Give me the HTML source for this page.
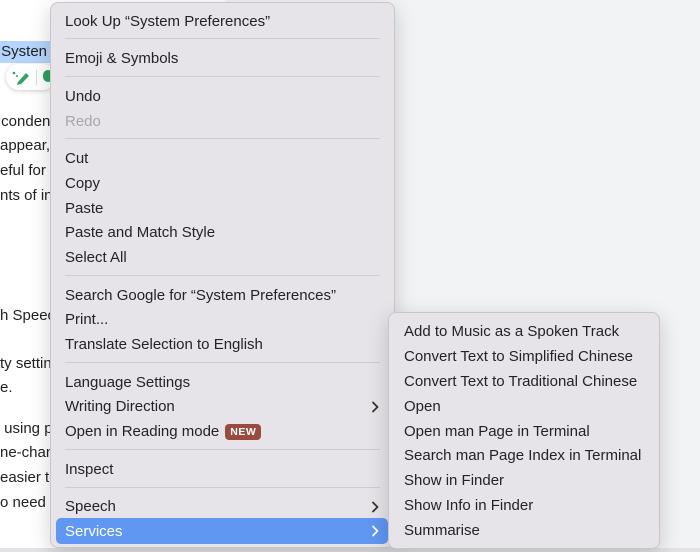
<!DOCTYPE html>
<html><head><meta charset="utf-8"><style>
*{margin:0;padding:0;box-sizing:border-box}
body{width:700px;height:552px;overflow:hidden;position:relative;background:#f2f3f5;font-family:"Liberation Sans",Helvetica,Arial,sans-serif;}
.page{position:absolute;left:0;top:0;width:225px;height:552px;background:#fff}
.pt{position:absolute;left:0;font-size:15px;color:#222;white-space:nowrap}
.menu{position:absolute;background:#e7e4e9;border:1px solid #c9c6cb;border-radius:8px;box-shadow:0 6px 22px rgba(0,0,0,.18)}
.it{position:absolute;left:14px;font-size:15px;color:#242226;white-space:nowrap;line-height:18px;margin-top:1px}
.dis{color:#a9a6ab}
.sep{position:absolute;left:14px;right:14px;height:1px;background:#cfccd1}
.chev{position:absolute;right:15px;width:8px;height:12px}
.hl{position:absolute;left:5px;right:6px;height:26px;background:#5f97f3;border-radius:5px}
.new{display:inline-block;background:#9b4a3f;color:#fff;font-size:10.5px;font-weight:bold;border-radius:4px;padding:2px 5px;margin-left:6px;vertical-align:1px;line-height:12px;letter-spacing:.5px}
</style></head><body>
<div class="page">
  <div style="position:absolute;left:0;top:41px;width:55px;height:22px;background:#b5d4fb"></div>
  <div class="pt" style="top:43px;left:-3px">&nbsp;Systen</div>
  <div style="position:absolute;left:6px;top:64px;width:50px;height:26px;background:#fff;border-radius:13px;box-shadow:0 1px 4px rgba(0,0,0,.2)"></div>
  <svg style="position:absolute;left:10px;top:67px" width="22" height="20" viewBox="0 0 22 20"><path d="M8 15 L16 6 L19 9 L11 17 L7 18 Z" fill="#2fa35f"/><circle cx="4" cy="6" r="1.3" fill="#2fa35f"/><circle cx="7" cy="9" r="1" fill="#2fa35f"/></svg>
  <div style="position:absolute;left:36px;top:70px;width:1px;height:15px;background:#ddd"></div>
  <div style="position:absolute;left:43px;top:70px;width:10px;height:12px;border-radius:5px;background:#2fa35f"></div>
  <div class="pt" style="top:113px;left:-3px">&nbsp;conden</div>
  <div class="pt" style="top:137px">appear,</div>
  <div class="pt" style="top:162px">eful for</div>
  <div class="pt" style="top:187px">nts of in</div>
  <div class="pt" style="top:307px">h Speec</div>
  <div class="pt" style="top:355px">ty settin</div>
  <div class="pt" style="top:379px">e.</div>
  <div class="pt" style="top:420px">&nbsp;using p</div>
  <div class="pt" style="top:444px">ne-chan</div>
  <div class="pt" style="top:469px">easier to</div>
  <div class="pt" style="top:494px">o need h</div>
</div>
<div style="position:absolute;left:0;top:548px;width:700px;height:4px;background:#e3e3e6"></div>

<div class="menu" style="left:50px;top:2px;width:345px;height:546px">
  <div class="it" style="top:9px">Look Up “System Preferences”</div>
  <div class="sep" style="top:35px"></div>
  <div class="it" style="top:46px">Emoji &amp; Symbols</div>
  <div class="sep" style="top:73px"></div>
  <div class="it" style="top:84px">Undo</div>
  <div class="it dis" style="top:109px">Redo</div>
  <div class="sep" style="top:135px"></div>
  <div class="it" style="top:146px">Cut</div>
  <div class="it" style="top:171px">Copy</div>
  <div class="it" style="top:196px">Paste</div>
  <div class="it" style="top:220px">Paste and Match Style</div>
  <div class="it" style="top:245px">Select All</div>
  <div class="sep" style="top:272px"></div>
  <div class="it" style="top:283px">Search Google for “System Preferences”</div>
  <div class="it" style="top:307px">Print...</div>
  <div class="it" style="top:332px">Translate Selection to English</div>
  <div class="sep" style="top:359px"></div>
  <div class="it" style="top:370px">Language Settings</div>
  <div class="it" style="top:394px">Writing Direction</div>
  <svg class="chev" style="top:398px" viewBox="0 0 8 12"><path d="M2 1.5 L6.5 6 L2 10.5" fill="none" stroke="#333" stroke-width="1.8" stroke-linecap="round" stroke-linejoin="round"/></svg>
  <div class="it" style="top:419px">Open in Reading mode<span class="new">NEW</span></div>
  <div class="sep" style="top:446px"></div>
  <div class="it" style="top:457px">Inspect</div>
  <div class="sep" style="top:484px"></div>
  <div class="it" style="top:494px">Speech</div>
  <svg class="chev" style="top:498px" viewBox="0 0 8 12"><path d="M2 1.5 L6.5 6 L2 10.5" fill="none" stroke="#333" stroke-width="1.8" stroke-linecap="round" stroke-linejoin="round"/></svg>
  <div class="hl" style="top:515px"></div>
  <div class="it" style="top:519px;color:#fff">Services</div>
  <svg class="chev" style="top:522px" viewBox="0 0 8 12"><path d="M2 1.5 L6.5 6 L2 10.5" fill="none" stroke="#fff" stroke-width="1.8" stroke-linecap="round" stroke-linejoin="round"/></svg>
</div>

<div class="menu" style="left:388px;top:312px;width:272px;height:237px">
  <div class="it" style="top:9px;left:15px">Add to Music as a Spoken Track</div>
  <div class="it" style="top:34px;left:15px">Convert Text to Simplified Chinese</div>
  <div class="it" style="top:59px;left:15px">Convert Text to Traditional Chinese</div>
  <div class="it" style="top:84px;left:15px">Open</div>
  <div class="it" style="top:109px;left:15px">Open man Page in Terminal</div>
  <div class="it" style="top:133px;left:15px">Search man Page Index in Terminal</div>
  <div class="it" style="top:158px;left:15px">Show in Finder</div>
  <div class="it" style="top:183px;left:15px">Show Info in Finder</div>
  <div class="it" style="top:208px;left:15px">Summarise</div>
</div>
</body></html>
